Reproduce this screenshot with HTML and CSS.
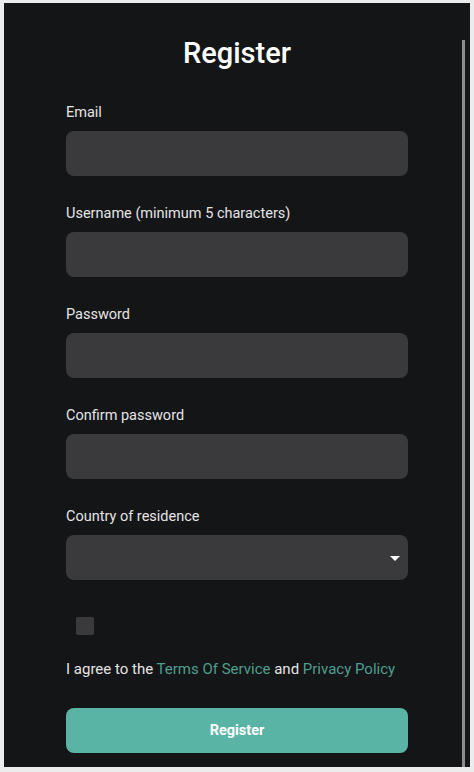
FILE: index.html
```html
<!DOCTYPE html>
<html lang="en">
<head>
<meta charset="utf-8">
<title>Register</title>
<link rel="stylesheet" href="styles.css">
</head>
<body>
<div class="screen">
  <form class="content">
    <h1 class="title">Register</h1>
    <div class="field">
      <label class="label" for="email">Email</label>
      <input class="input" id="email" type="email">
    </div>
    <div class="field">
      <label class="label" for="username">Username (minimum 5 characters)</label>
      <input class="input" id="username" type="text">
    </div>
    <div class="field">
      <label class="label" for="password">Password</label>
      <input class="input" id="password" type="password">
    </div>
    <div class="field">
      <label class="label" for="confirm">Confirm password</label>
      <input class="input" id="confirm" type="password">
    </div>
    <div class="field last">
      <label class="label" for="country">Country of residence</label>
      <div class="select-wrap">
        <select class="input select" id="country"><option></option></select>
        <svg class="caret" width="10" height="5" viewBox="0 0 10 5"><path d="M0 0H10L5 5Z" fill="#ffffff"/></svg>
      </div>
    </div>
    <div class="check-row"><input type="checkbox" class="checkbox" aria-label="agree"></div>
    <p class="agree">I agree to the <a class="link" href="#">Terms Of Service</a> and <a class="link" href="#">Privacy Policy</a></p>
    <button type="button" class="btn">Register</button>
  </form>
  <div class="scroll"><div class="thumb"></div></div>
</div>
</body>
</html>
```

FILE: styles.css
```css
* { box-sizing: border-box; }
html, body { margin: 0; }
body {
  background: #ececec;
  padding: 3px 4px 5px 4px;
  font-family: Roboto, "Liberation Sans", sans-serif;
}
.screen {
  height: 764px;
  background: #141517;
  display: flex;
}
.content {
  width: 458px;
  padding: 33px 54px 0 62px;
  display: flex;
  flex-direction: column;
  margin: 0;
}
.title {
  margin: 0 0 33px;
  font-size: 29px;
  line-height: 34px;
  font-weight: 500;
  color: #ffffff;
  text-align: center;
}
.field {
  display: flex;
  flex-direction: column;
  gap: 8px;
  margin-bottom: 28px;
}
.field.last { margin-bottom: 26px; }
.label {
  font-size: 14.5px;
  line-height: 20px;
  color: #e4e4e4;
}
.input {
  display: block;
  width: 100%;
  height: 45px;
  border: none;
  border-radius: 8px;
  background: #3a3a3c;
  color: #fff;
  outline: none;
  padding: 0 12px;
  font: inherit;
}
.select-wrap { position: relative; }
.select { appearance: none; -webkit-appearance: none; }
.caret { position: absolute; right: 8px; top: 21px; }
.check-row {
  padding: 11px 0 0 10px;
  height: 53px;
}
.checkbox {
  appearance: none;
  -webkit-appearance: none;
  margin: 0;
  width: 18px;
  height: 18px;
  background: #3a3a3c;
  border-radius: 2px;
  display: block;
}
.agree {
  margin: 0;
  font-size: 15px;
  line-height: 20px;
  color: #e4e4e4;
}
.link { color: #4f9e8f; text-decoration: none; }
.btn {
  margin-top: 29px;
  height: 45px;
  border: none;
  border-radius: 8px;
  background: #5ab4a6;
  color: #ffffff;
  font: inherit;
  font-size: 14.5px;
  font-weight: 700;
}
.scroll {
  width: 8px;
  padding-top: 37px;
}
.thumb {
  width: 3px;
  height: 100%;
  background: #8c8c8c;
}
```
